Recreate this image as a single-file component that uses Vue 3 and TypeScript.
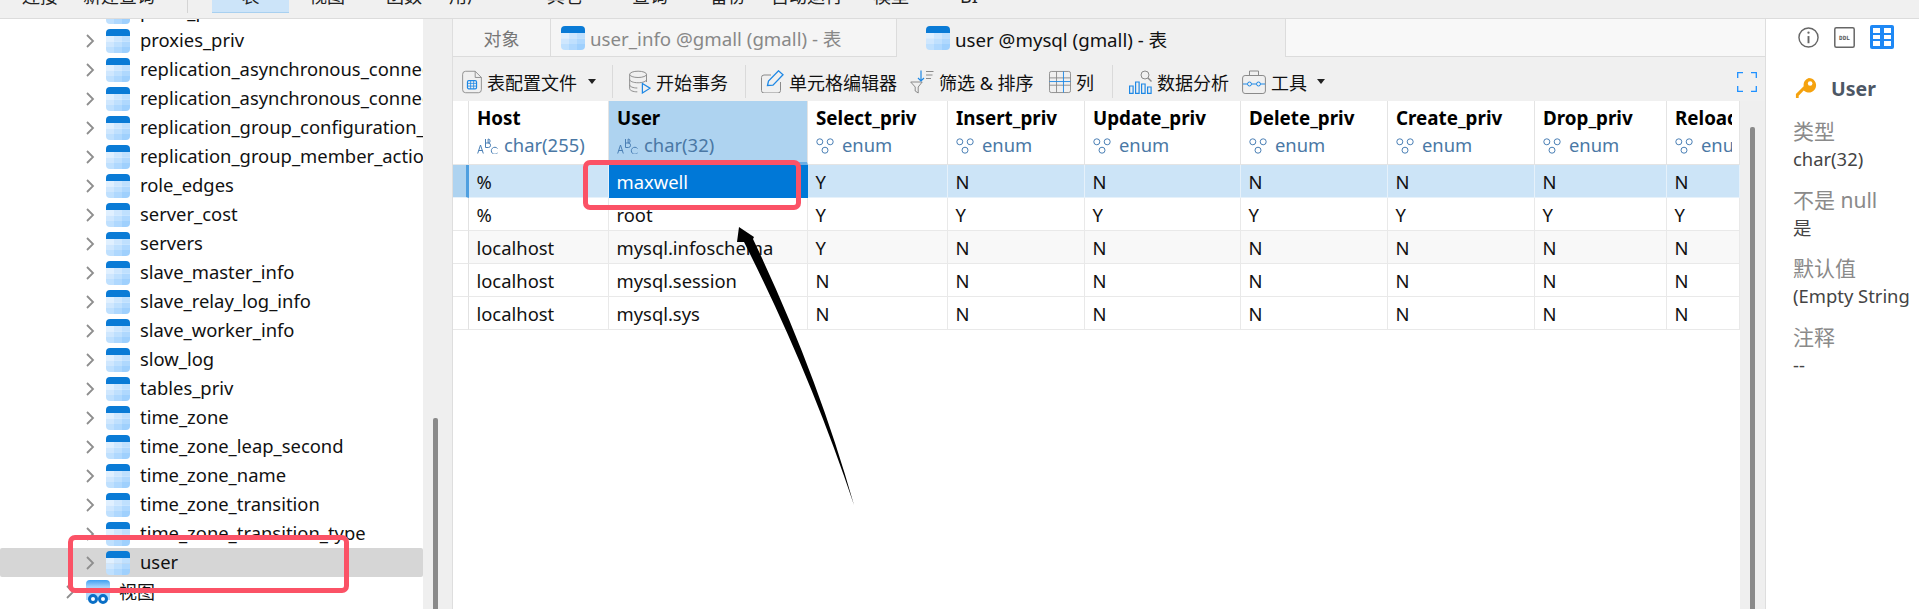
<script setup lang="ts">
const menu = [
  { t: '连接', ml: 22 }, { t: '新建查询', ml: 25 }, { t: '表', ml: 56, on: true }, { t: '视图', ml: 20 },
  { t: '函数', ml: 41 }, { t: '用户', ml: 27 }, { t: '其它', ml: 62 }, { t: '查询', ml: 49 },
  { t: '备份', ml: 42 }, { t: '自动运行', ml: 25 }, { t: '模型', ml: 30 }, { t: 'BI', ml: 51 },
]
const tables = ['proxies_priv','replication_asynchronous_connection_source','replication_asynchronous_connection_failover','replication_group_configuration_version','replication_group_member_actions','role_edges','server_cost','servers','slave_master_info','slave_relay_log_info','slave_worker_info','slow_log','tables_priv','time_zone','time_zone_leap_second','time_zone_name','time_zone_transition','time_zone_transition_type','user']
const cols = [
  { n: 'Host', t: 'char(255)', w: 140, s: true }, { n: 'User', t: 'char(32)', w: 199, s: true },
  { n: 'Select_priv', t: 'enum', w: 140 }, { n: 'Insert_priv', t: 'enum', w: 137 },
  { n: 'Update_priv', t: 'enum', w: 156 }, { n: 'Delete_priv', t: 'enum', w: 147 },
  { n: 'Create_priv', t: 'enum', w: 147 }, { n: 'Drop_priv', t: 'enum', w: 132 },
  { n: 'Reload_priv', t: 'enum', w: 73 },
]
const rows = [
  ['%','maxwell','Y','N','N','N','N','N','N'],
  ['%','root','Y','Y','Y','Y','Y','Y','Y'],
  ['localhost','mysql.infoschema','Y','N','N','N','N','N','N'],
  ['localhost','mysql.session','N','N','N','N','N','N','N'],
  ['localhost','mysql.sys','N','N','N','N','N','N','N'],
]
const gridCols = cols.map(c => c.w + 'px').join(' ')
</script>

<template>
  <div class="app">
    <svg class="defs" width="0" height="0">
      <defs>
        <g id="tb">
          <path d="M4 0h16a4 4 0 0 1 4 4v3H0V4a4 4 0 0 1 4-4z" fill="#0a7bd6" />
          <path d="M0 7h8v5.500H0z" fill="#e0f0ff" />
          <path d="M8 7h8v5.500H8z" fill="#cfe7fe" />
          <path d="M16 7h8v5.500h-8z" fill="#bfe0fe" />
          <path d="M0 12.500h8V18H0z" fill="#cfe7fe" />
          <path d="M8 12.500h8V18H8z" fill="#bfe0fe" />
          <path d="M16 12.500h8V18h-8z" fill="#afd8fe" />
          <path d="M0 18h8v6H4a4 4 0 0 1-4-4z" fill="#bfe0fe" />
          <path d="M8 18h8v6H8z" fill="#afd8fe" />
          <path d="M16 18h8v2a4 4 0 0 1-4 4h-4z" fill="#9fd0fd" />
        </g>
        <linearGradient id="vw" x1="0" y1="0" x2="0" y2="1">
          <stop offset="0" stop-color="#3fa0f2" />
          <stop offset=".35" stop-color="#a6d4fc" />
          <stop offset="1" stop-color="#b8defd" />
        </linearGradient>
      </defs>
    </svg>
    <header class="menubar">
      <template v-for="m in menu" :key="m.t">
        <i v-if="m.on" class="msep"></i>
        <div class="mitem" :class="{ on: m.on }" :style="{ marginLeft: (m.on ? 24 : m.ml) + 'px' }"><span>{{ m.t }}</span></div>
      </template>
    </header>
    <div class="main">
      <aside class="side">
        <div class="tree">
          <div class="peek">
            <svg class="tico" viewBox="0 0 24 24"><use href="#tb" /></svg>
            <span class="ntext">procs_priv</span>
          </div>
          <div v-for="t in tables" :key="t" class="node" :class="{ sel: t === 'user' }">
            <svg class="chev" viewBox="0 0 10 14"><path d="M2 1 8 7l-6 6" /></svg>
            <svg class="tico" viewBox="0 0 24 24"><use href="#tb" /></svg>
            <span class="ntext">{{ t }}</span>
          </div>
          <div class="node views">
            <svg class="chev" viewBox="0 0 10 14"><path d="M2 1 8 7l-6 6" /></svg>
            <svg class="tico" viewBox="0 0 24 24">
              <path d="M4 0h16a4 4 0 0 1 4 4v16H0V4a4 4 0 0 1 4-4z" fill="url(#vw)" />
              <circle cx="7" cy="19" r="3.500" fill="#fff" stroke="#0a6fc6" stroke-width="3" />
              <circle cx="17" cy="19" r="3.500" fill="#fff" stroke="#0a6fc6" stroke-width="3" />
            </svg>
            <span class="ntext">视图</span>
          </div>
        </div>
        <div class="gutter"><i class="thumb side-thumb"></i></div>
      </aside>

      <section class="center">
        <div class="tabs">
          <div class="tab obj">对象</div>
          <div class="tab info">
            <svg class="tico" viewBox="0 0 24 24"><use href="#tb" /></svg><span>user_info @gmall (gmall) - 表</span>
          </div>
          <div class="tab act">
            <svg class="tico" viewBox="0 0 24 24"><use href="#tb" /></svg><span>user @mysql (gmall) - 表</span>
          </div>
          <div class="tabfill"></div>
        </div>
        <div class="toolbar">
          <div class="tool t1">
            <svg width="21" height="24" viewBox="0 0 22 25" fill="none"><path d="M4 .7h10.500L21.300 7.500V21a3.300 3.300 0 0 1-3.300 3.300H4A3.300 3.300 0 0 1 .7 21V4A3.300 3.300 0 0 1 4 .7z" stroke="#8a8a8a" /><path d="M14.500.7v6.800h6.800" stroke="#8a8a8a" /><rect x="6" y="11" width="10" height="9" rx="1.500" stroke="#1e88e5" stroke-width="1.300" /><path d="M6 14h10M6 17h10M9.500 11v9M12.800 11v9" stroke="#1e88e5" stroke-width=".9" /></svg>
            <span>表配置文件</span><i class="caret"></i>
          </div>
          <i class="tsep"></i>
          <div class="tool t2">
            <svg width="23" height="24" viewBox="0 0 23 24" fill="none" stroke="#8a8a8a"><ellipse cx="9.500" cy="4" rx="8.800" ry="3.300" /><path d="M.7 4v15c0 1.800 3.500 3.300 8 3.300M18.300 4v8M.7 9.500c0 1.800 4 3.300 8.800 3.300s8.800-1.500 8.800-3.300M.7 15c0 1.800 3.500 3.300 8 3.300" /><path d="M14 13.500l8 5-8 5z" stroke="#1e88e5" stroke-width="1.300" /></svg>
            <span>开始事务</span>
          </div>
          <i class="tsep"></i>
          <div class="tool t3">
            <svg width="23" height="23" viewBox="0 0 23 23" fill="none"><path d="M10 5H3a2.500 2.500 0 0 0-2.500 2.500v13A2.500 2.500 0 0 0 3 23h14a2.500 2.500 0 0 0 2.500-2.500V12" stroke="#8a8a8a" /><path d="M6.500 15.500l1-4.500L17.500.8l4.500 4-10 10.300z" stroke="#1e88e5" stroke-width="1.300" /></svg>
            <span>单元格编辑器</span>
          </div>
          <div class="tool t4">
            <svg width="24" height="24" viewBox="0 0 24 24" fill="none"><path d="M.7 12h11.500l-4 5v6l-3-2v-4z" stroke="#8a8a8a" /><path d="M11 .5V11M8 8l3 3 3-3" stroke="#1e88e5" stroke-width="1.200" /><path d="M16 1.500h7.500M16 5h6.500M16 8.500h5" stroke="#8a8a8a" /></svg>
            <span>筛选 &amp; 排序</span>
          </div>
          <div class="tool t5">
            <svg width="24" height="24" viewBox="0 0 24 24" fill="none" stroke="#8a8a8a"><rect x=".5" y=".5" width="23" height="23" rx="2" /><path d="M.5 7.500h23M.5 15.500h23M8.200.5v23" /><path d="M15.800.5v23M.5 11.500h23" stroke="#1e88e5" /></svg>
            <span>列</span>
          </div>
          <i class="tsep"></i>
          <div class="tool t6">
            <svg width="23" height="24" viewBox="0 0 23 24" fill="none"><path d="M.6 16h3.500v7.400H.6zM6.600 12h3.500v11.400H6.600zM12.600 14h3.500v9.400h-3.500zM18.600 17h3.500v6.400h-3.500z" stroke="#1e88e5" stroke-width="1.200" /><circle cx="16" cy="5" r="4" stroke="#8a8a8a" /><path d="M19 8l3.500 3.500" stroke="#8a8a8a" stroke-width="1.400" /></svg>
            <span>数据分析</span>
          </div>
          <div class="tool t7">
            <svg width="24" height="24" viewBox="0 0 24 24" fill="none"><rect x=".6" y="5.500" width="22.800" height="18" rx="2.500" stroke="#8a8a8a" /><path d="M7.500 5.500V1h9v4.500" stroke="#8a8a8a" /><path d="M1 14h4M19 14h4M10 14h4" stroke="#1e88e5" /><circle cx="7.500" cy="14" r="2" stroke="#1e88e5" /><circle cx="16.500" cy="14" r="2" stroke="#1e88e5" /></svg>
            <span>工具</span><i class="caret"></i>
          </div>
          <svg class="full" width="20" height="20" viewBox="0 0 20 20" fill="none" stroke="#1e90ff" stroke-width="1.300"><path d="M6 .7H.7V6M14 .7h5.300V6M.7 14v5.300H6M19.300 14v5.300H14" /></svg>
        </div>
        <div class="gridwrap">
          <div class="grid">
            <div class="rowhead">
              <div class="hgut"></div>
              <div class="hcells" :style="{ gridTemplateColumns: gridCols }">
                <div v-for="c in cols" :key="c.n" class="hc" :class="{ hsel: c.n === 'User' }">
                  <b>{{ c.n }}</b>
                  <div class="ty">
                    <svg v-if="c.s" class="abc" width="21" height="16" viewBox="0 0 21 16" fill="none" stroke="#4a7fb5"><path d="M.7 15.500 3.500 7l2.800 8.500M1.600 12.500h3.800M8.500 1v8.500h2.800a2.200 2.200 0 0 0 0-4.500H8.500m2.600 0a2 2 0 0 0 0-4zM20.500 10.500a3.500 3.500 0 1 0 0 4.500" /></svg>
                    <svg v-else class="enm" width="18" height="16" viewBox="0 0 18 16" fill="none" stroke="#4a7fb5"><circle cx="3.800" cy="3.800" r="3" /><circle cx="14.200" cy="3.800" r="3" /><circle cx="9" cy="12.200" r="3" /></svg>
                    <span :class="c.s ? 'ts' : 'te'">{{ c.t }}</span>
                  </div>
                </div>
              </div>
            </div>
            <div v-for="(r, i) in rows" :key="i" class="row" :class="{ cur: i === 0, alt: i === 2 }">
              <div class="rgut"></div>
              <div class="cells" :style="{ gridTemplateColumns: gridCols }">
                <div v-for="(v, j) in r" :key="j" class="c" :class="{ csel: i === 0 && j === 1 }">{{ v }}</div>
              </div>
            </div>
          </div>
          <div class="gutter2"></div>
        </div>
      </section>

      <aside class="info-panel">
        <div class="ptabs">
          <svg width="21" height="21" viewBox="0 0 22 22" fill="none" stroke="#666" stroke-width="1.500"><circle cx="11" cy="11" r="10" /><path d="M11 9.500V17" stroke-width="2" /><circle cx="11" cy="6" r="1.200" fill="#666" stroke="none" /></svg>
          <svg width="21" height="21" viewBox="0 0 21 21" fill="none"><rect x=".8" y=".8" width="19.400" height="19.400" rx="1.500" stroke="#666" stroke-width="1.500" /><text x="10.500" y="13" text-anchor="middle" class="ddl">DDL</text></svg>
          <svg width="24" height="24" viewBox="0 0 24 24"><rect width="24" height="24" rx="2" fill="#1e88f5" /><path d="M3 3h7v5H3zM14 3h7v5h-7zM3 10h7v4H3zM14 10h7v4h-7zM3 16h7v5H3zM14 16h7v5h-7z" fill="#fff" /></svg>
        </div>
        <div class="ptitle">
          <svg width="22" height="22" viewBox="0 0 24 24"><path d="M15 1a8 8 0 1 1-5.500 13.800L4 20.500V23H1v-4.500l8.500-8.500A8 8 0 0 1 15 1z" fill="#f5a20e" /><circle cx="16.500" cy="7" r="2.500" fill="#fff" /></svg>
          <b>User</b>
        </div>
        <div class="pbody">
          <div class="plabel first">类型</div><div class="pval">char(32)</div>
          <div class="plabel">不是 null</div><div class="pval">是</div>
          <div class="plabel">默认值</div><div class="pval">(Empty String)</div>
          <div class="plabel">注释</div><div class="pval">--</div>
        </div>
      </aside>
    </div>

    <i class="gridbar"></i>
    <div class="mark m1"></div>
    <div class="mark m2"></div>
    <svg class="arrow" width="150" height="300" viewBox="0 0 150 300"><path d="M19 12 34 22 33 24Q96.500 157 134 290 89 155.500 24 27L17 27z" fill="#000" /></svg>
  </div>
</template>

<style>
html, body { margin: 0; padding: 0; background: #fff; overflow: hidden; }
</style>

<style scoped>
.app { position: relative; width: 1919px; height: 609px; overflow: hidden; font-family: "Noto Sans", "Noto Sans CJK SC", sans-serif; font-size: 18.4px; color: #111; background: #fff; }
.defs { position: absolute; }
.menubar { position: relative; z-index: 2; height: 19px; box-sizing: border-box; background: #f0f0f0; border-bottom: 1px solid #dcdcdc; display: flex; align-items: flex-start; overflow: hidden; }
.msep { flex: none; width: 1px; height: 13px; background: #d4d4d4; margin-left: 32px; }
.mitem { flex: none; height: 13px; line-height: 18px; font-size: 18px; color: #222; }
.mitem span { display: block; margin-top: -13px; }
.mitem.on { box-sizing: border-box; width: 77px; text-align: center; background: #cce4f9; border-bottom: 1px solid #a8d0f0; }
.main { display: flex; height: 590px; }
.side { width: 453px; flex: none; display: flex; }
.tree { width: 423px; flex: none; overflow: hidden; padding-top: 8px; margin-top: -30px; height: 620px; box-sizing: border-box; }
.gutter { width: 30px; flex: none; background: #efefef; border-right: 1px solid #dedede; box-sizing: border-box; position: relative; }
.thumb { position: absolute; display: block; width: 5px; background: #8a8a8a; border-radius: 2px; }
.side-thumb { left: 10px; top: 399px; bottom: -6px; }
.peek { height: 29px; display: flex; align-items: center; padding-left: 106px; box-sizing: border-box; white-space: nowrap; }
.node { height: 29px; display: flex; align-items: center; box-sizing: border-box; white-space: nowrap; overflow: hidden; }
.node.sel { background: #d6d6d6; border-radius: 2px; }
.chev { width: 10px; height: 14px; margin-left: 85px; margin-right: 11px; flex: none; fill: none; stroke: #8e8e8e; stroke-width: 1.800; }
.tico { width: 24px; height: 24px; flex: none; }
.ntext { margin: 0 0 2px 10px; }
.views .chev { margin-left: 65px; margin-right: 11px; }
.views .ntext { margin-left: 9px; font-size: 18px; }
.center { flex: none; width: 1312px; display: flex; flex-direction: column; }
.tabs { height: 38px; display: flex; flex: none; box-sizing: border-box; font-size: 18.7px; }
.tab { display: flex; align-items: center; box-sizing: border-box; height: 38px; border-bottom: 1px solid #dcdcdc; white-space: nowrap; flex: none; }
.tab span { margin-left: 5px; }
.obj { width: 98px; justify-content: center; background: #f5f5f5; color: #777; border-right: 1px solid #dcdcdc; font-size: 18px; }
.info { width: 346px; background: #f5f5f5; color: #888; padding-left: 10px; border-right: 1px solid #dcdcdc; }
.act { width: 388px; background: #f0f0f0; padding-left: 29px; border-bottom: none; }
.tabfill { flex: 1; background: #f8f8f8; border-bottom: 1px solid #dcdcdc; border-left: 1px solid #dcdcdc; }
.toolbar { height: 44px; flex: none; background: #f0f0f0; display: flex; align-items: center; position: relative; padding: 5px 0 0 9px; font-size: 18px; box-sizing: border-box; }
.tool { display: flex; align-items: center; flex: none; gap: 5px; white-space: nowrap; }
.caret { width: 0; height: 0; border: 4px solid transparent; border-top: 5px solid #222; border-bottom: none; margin-left: 6px; }
.tsep { width: 1px; height: 33px; background: #dadada; flex: none; }
.t1 { width: 134px; margin-right: 16px; }
.t2 { width: 99px; margin: 0 17px 0 16px; }
.t3 { width: 136px; margin-left: 15px; }
.t4 { width: 126px; margin-left: 13px; }
.t5 { width: 45px; margin-left: 13px; margin-right: 18px; }
.t6 { width: 100px; margin-left: 16px; }
.t7 { margin-left: 13px; }
.t7 .caret { margin-left: 5px; }
.full { position: absolute; left: 1284px; top: 15px; }
.gridwrap { flex: 1; display: flex; min-height: 0; }
.grid { width: 1287px; background: #fff; overflow: hidden; flex: none; }
.gutter2 { width: 25px; flex: none; background: #efefef; }
.gridbar { position: absolute; z-index: 2; display: block; left: 1750px; top: 127px; width: 5px; height: 490px; background: #8a8a8a; border-radius: 2px; }
.rowhead { display: flex; height: 64px; }
.hgut { width: 16px; flex: none; box-sizing: border-box; border-right: 1px solid #e2e2e2; border-bottom: 1px solid #e8e8e8; }
.hcells { display: grid; overflow: hidden; flex: 1; }
.hc { padding: 4px 7px 0 8px; box-sizing: border-box; border-right: 1px solid #e4e4e4; border-bottom: 1px solid #e4e4e4; overflow: hidden; white-space: nowrap; height: 64px; }
.hc b { display: block; line-height: 26px; font-size: 18.800px; font-weight: 700; color: #000; overflow: hidden; }
.hsel { background: #aed3f0; border-bottom: 3px solid #6aaee6; }
.ty { display: flex; align-items: center; color: #4a78a5; line-height: 28px; overflow: hidden; }
.ts { margin-left: 6px; }
.te { margin-left: 8px; }
.abc, .enm { flex: none; margin-top: 2px; }
.row { display: flex; height: 33px; }
.rgut { width: 16px; flex: none; box-sizing: border-box; border-right: 1px solid #e2e2e2; border-bottom: 1px solid #e8e8e8; }
.cells { display: grid; flex: 1; overflow: hidden; }
.c { padding-left: 7.500px; line-height: 34px; height: 33px; box-sizing: border-box; border-right: 1px solid #e9e9e9; border-bottom: 1px solid #e9e9e9; overflow: hidden; white-space: nowrap; }
.alt .c { background: #f8f8f8; }
.cur .c { background: #cce4f7; border-color: #e6f1fa; }
.cur .rgut { background: #aed3f0; border-right: 3px solid #4e9fe0; border-bottom-color: #e6f1fa; }
.cur .c.csel { background: #0078d7; color: #fff; border-color: #0078d7; }
.info-panel { flex: 1; border-left: 1px solid #dedede; padding-left: 27px; box-sizing: border-box; background: #fff; white-space: nowrap; overflow: hidden; min-width: 0; }
.ptabs { display: flex; align-items: center; gap: 15px; height: 36px; margin-left: 5px; }
.ddl { font: 700 6px "DejaVu Sans Mono", monospace; fill: #555; }
.ptitle { display: flex; align-items: center; gap: 14px; margin: 18px 0 0 2px; height: 30px; color: #4d5765; font-size: 19.500px; }
.pbody { width: 116px; overflow: hidden; }
.plabel { color: #8a8a8a; line-height: 28px; height: 28px; margin-top: 12.700px; font-size: 21px; }
.plabel.first { margin-top: 14px; }
.pval { line-height: 28px; height: 28px; color: #444; font-size: 18.400px; }
.mark { position: absolute; z-index: 3; border: 5px solid #fb5266; border-radius: 7px; box-sizing: border-box; pointer-events: none; }
.m1 { left: 68px; top: 535px; width: 281px; height: 58px; }
.m2 { left: 583px; top: 160px; width: 218px; height: 50px; }
.arrow { position: absolute; z-index: 3; left: 720px; top: 215px; pointer-events: none; }
</style>
